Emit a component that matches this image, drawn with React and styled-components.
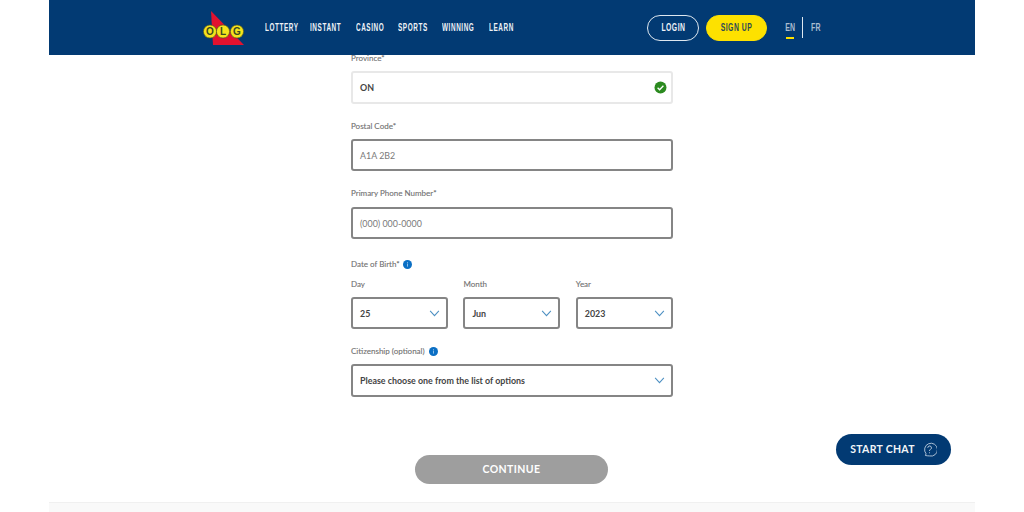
import React from "react";
import styled, { createGlobalStyle } from "styled-components";

const Global = createGlobalStyle`
  html, body { margin: 0; padding: 0; background: #fff; overflow: hidden; }
  body { font-family: Lato, "Liberation Sans", sans-serif; }
`;

const Page = styled.div`
  position: relative;
  width: 1024px;
  height: 512px;
  overflow: hidden;
  display: flex;
  flex-direction: column;
  align-items: center;
`;

const Header = styled.header`
  width: 926px;
  height: 55px;
  flex: none;
  background: #023a73;
  display: flex;
  align-items: center;
  padding-left: 153px;
  box-sizing: border-box;
`;

const Logo = styled.svg`
  width: 44px;
  height: 36px;
  flex: none;
`;

const LogoLetter = styled.text`
  font-family: "Liberation Sans", sans-serif;
  font-weight: 700;
  font-size: 10px;
  fill: #3a4a22;
  text-anchor: middle;
`;

const Nav = styled.nav`
  display: flex;
  margin: 0 0 2px 19px;
`;

const NavItem = styled.a`
  width: ${(p) => p.$w}px;
  margin-right: ${(p) => p.$gap}px;
  flex: none;
  white-space: nowrap;
  font-family: "Liberation Sans", sans-serif;
  font-weight: 700;
  font-size: 11px;
  letter-spacing: 1px;
  color: #eef2f7;
  transform: scaleX(0.58);
  transform-origin: left center;
`;

const Auth = styled.div`
  display: flex;
  align-items: center;
  gap: 7px;
  margin-left: 134px;
`;

const Pill = styled.a`
  height: 23px;
  width: ${(p) => p.$w}px;
  padding-bottom: 1px;
  box-sizing: content-box;
  border-radius: 13px;
  display: flex;
  align-items: center;
  justify-content: center;
  border: 1.5px solid ${(p) => (p.$yellow ? "#fde100" : "#dfe8f0")};
  background: ${(p) => (p.$yellow ? "#fde100" : "transparent")};
  color: ${(p) => (p.$yellow ? "#2e4a56" : "#eef2f7")};
`;

const PillText = styled.span`
  flex: none;
  white-space: nowrap;
  font-family: "Liberation Sans", sans-serif;
  font-weight: 700;
  font-size: 11px;
  letter-spacing: 0.8px;
  transform: scaleX(0.62);
`;

const Lang = styled.div`
  display: flex;
  align-items: center;
  margin-left: 18px;
  height: 21px;
`;

const LangItem = styled.span`
  position: relative;
  width: 10px;
  display: flex;
  justify-content: center;
  color: #a9bcd0;
  ${(p) =>
    p.$active &&
    `&::after {
      content: "";
      position: absolute;
      left: 1px;
      right: 1px;
      bottom: -6px;
      height: 2px;
      background: #fde100;
    }`}
`;

const LangText = styled.span`
  flex: none;
  font-family: "Liberation Sans", sans-serif;
  font-weight: 700;
  font-size: 10px;
  letter-spacing: 0.3px;
  transform: scaleX(0.7);
`;

const LangDivider = styled.span`
  width: 1px;
  height: 21px;
  background: #dfe8f0;
  margin: 0 8px 0 7px;
`;

const Form = styled.main`
  width: 322px;
  flex: none;
  display: flex;
  flex-direction: column;
`;

const Label = styled.label`
  display: flex;
  align-items: center;
  gap: ${(p) => p.$gap ?? 4}px;
  font-size: 8px;
  line-height: 10px;
  height: 10px;
  color: #707070;
  margin-top: ${(p) => p.$mt ?? 0}px;
  margin-bottom: ${(p) => p.$mb ?? 8}px;
  -webkit-text-stroke: 0.1px #707070;
`;

const Field = styled.div`
  height: ${(p) => p.$h ?? 32}px;
  box-sizing: border-box;
  border: 2px solid ${(p) => (p.$done ? "#e8e8e8" : "#858585")};
  border-radius: 3px;
  background: #fff;
  display: flex;
  align-items: center;
  justify-content: space-between;
  padding: 0 ${(p) => (p.$done ? 4 : 6)}px 0 7px;
  font-size: 8.9px;
  color: ${(p) => (p.$placeholder ? "#7a7a7a" : "#444")};
  font-weight: ${(p) => (p.$placeholder ? 400 : 700)};
`;

const DateRow = styled.div`
  display: grid;
  grid-template-columns: 97px 97px 97px;
  column-gap: 15.4px;
`;

const DateCol = styled.div`
  display: flex;
  flex-direction: column;
`;

const Chevron = () => (
  <svg width="11" height="7" viewBox="0 0 12 8" fill="none">
    <path d="M1 1l5 5.5L11 1" stroke="#4d90c2" strokeWidth="1.2" />
  </svg>
);

const Check = () => (
  <svg width="13" height="13" viewBox="0 0 13 13">
    <circle cx="6.5" cy="6.5" r="6" fill="#2b8a1f" />
    <path d="M3.6 6.8l2 2 3.8-4" stroke="#fff" strokeWidth="1.3" fill="none" />
  </svg>
);

const Info = () => (
  <svg width="9" height="9" viewBox="0 0 9 9">
    <circle cx="4.5" cy="4.5" r="4.5" fill="#0b6fc4" />
    <rect x="4.1" y="3.6" width="0.9" height="3" fill="#9cc8ec" />
    <rect x="4.1" y="2.2" width="0.9" height="0.9" fill="#9cc8ec" />
  </svg>
);

const Continue = styled.button`
  width: 193px;
  height: 29px;
  align-self: flex-start;
  margin: 58px 0 0 64px;
  padding: 0 0 2px;
  border: 0;
  border-radius: 15px;
  background: #9e9e9e;
  color: #fff;
  font-family: Lato, sans-serif;
  font-weight: 700;
  font-size: 10.5px;
  letter-spacing: 0.4px;
  flex: none;
`;

const Footer = styled.footer`
  position: absolute;
  left: 49px;
  top: 502px;
  width: 926px;
  height: 10px;
  background: #f9f9f9;
  border-top: 1px solid #f0f0f0;
  box-sizing: border-box;
`;

const Chat = styled.button`
  position: absolute;
  left: 836px;
  top: 434px;
  width: 115px;
  height: 31px;
  border: 0;
  border-radius: 16px;
  background: #023a73;
  color: #f2f5f8;
  font-family: Lato, sans-serif;
  font-weight: 700;
  font-size: 10.5px;
  letter-spacing: 0.3px;
  display: flex;
  align-items: center;
  justify-content: center;
  gap: 7px;
  padding: 0 0 1px 0;
`;

const ChatIcon = () => (
  <svg width="15" height="15" viewBox="0 0 14 14" fill="none">
    <path d="M3.2 12.6l.6-1.6A6 6 0 1 1 7 13c-1.3 0-2.6-.2-3.8-.4z" stroke="#c5d3e2" strokeWidth="0.8" />
    <path d="M5.4 5.4a1.7 1.7 0 1 1 2.5 1.5c-.6.3-.9.7-.9 1.4" stroke="#c5d3e2" strokeWidth="0.9" />
    <circle cx="7" cy="10" r="0.55" fill="#c5d3e2" />
  </svg>
);

const LogoMark = () => (
  <Logo viewBox="0 0 44 36">
    <polygon points="9,1 42,35 11,35" fill="#e2122f" />
    <g stroke="#4a5320" strokeWidth="0.7" fill="#f5e31c">
      <circle cx="8" cy="21.5" r="6.6" />
      <circle cx="21" cy="21.5" r="6.6" />
      <circle cx="35" cy="21.5" r="6.6" />
    </g>
    <LogoLetter x="8" y="25">O</LogoLetter>
    <LogoLetter x="21" y="25">L</LogoLetter>
    <LogoLetter x="35" y="25">G</LogoLetter>
  </Logo>
);

const navItems = [
  ["LOTTERY", 33, 12],
  ["INSTANT", 33, 13],
  ["CASINO", 29, 13],
  ["SPORTS", 30, 14],
  ["WINNING", 33, 14],
  ["LEARN", 24, 0],
];

export default function App() {
  return (
    <Page>
      <Global />
      <Header>
        <LogoMark />
        <Nav>
          {navItems.map(([n, w, gap]) => (
            <NavItem key={n} $w={w} $gap={gap}>{n}</NavItem>
          ))}
        </Nav>
        <Auth>
          <Pill $w={50}><PillText>LOGIN</PillText></Pill>
          <Pill $yellow $w={59}><PillText>SIGN UP</PillText></Pill>
        </Auth>
        <Lang>
          <LangItem $active><LangText>EN</LangText></LangItem>
          <LangDivider />
          <LangItem><LangText>FR</LangText></LangItem>
        </Lang>
      </Header>
      <Form>
        <Label $mb={8} $mt={-2}>Province*</Label>
        <Field $done $h={33}>
          ON
          <Check />
        </Field>
        <Label $mt={17} $mb={8}>Postal Code*</Label>
        <Field $placeholder>A1A 2B2</Field>
        <Label $mt={17} $mb={9}>Primary Phone Number*</Label>
        <Field $placeholder>(000) 000-0000</Field>
        <Label $mt={20} $gap={3}>
          Date of Birth* <Info />
        </Label>
        <DateRow>
          <DateCol>
            <Label $mt={2} $mb={8}>Day</Label>
            <Field>25<Chevron /></Field>
          </DateCol>
          <DateCol>
            <Label $mt={2} $mb={8}>Month</Label>
            <Field>Jun<Chevron /></Field>
          </DateCol>
          <DateCol>
            <Label $mt={2} $mb={8}>Year</Label>
            <Field>2023<Chevron /></Field>
          </DateCol>
        </DateRow>
        <Label $mt={17} $mb={8}>
          Citizenship (optional) <Info />
        </Label>
        <Field $h={33}>
          Please choose one from the list of options
          <Chevron />
        </Field>
        <Continue>CONTINUE</Continue>
      </Form>
      <Chat>
        START CHAT
        <ChatIcon />
      </Chat>
      <Footer />
    </Page>
  );
}
